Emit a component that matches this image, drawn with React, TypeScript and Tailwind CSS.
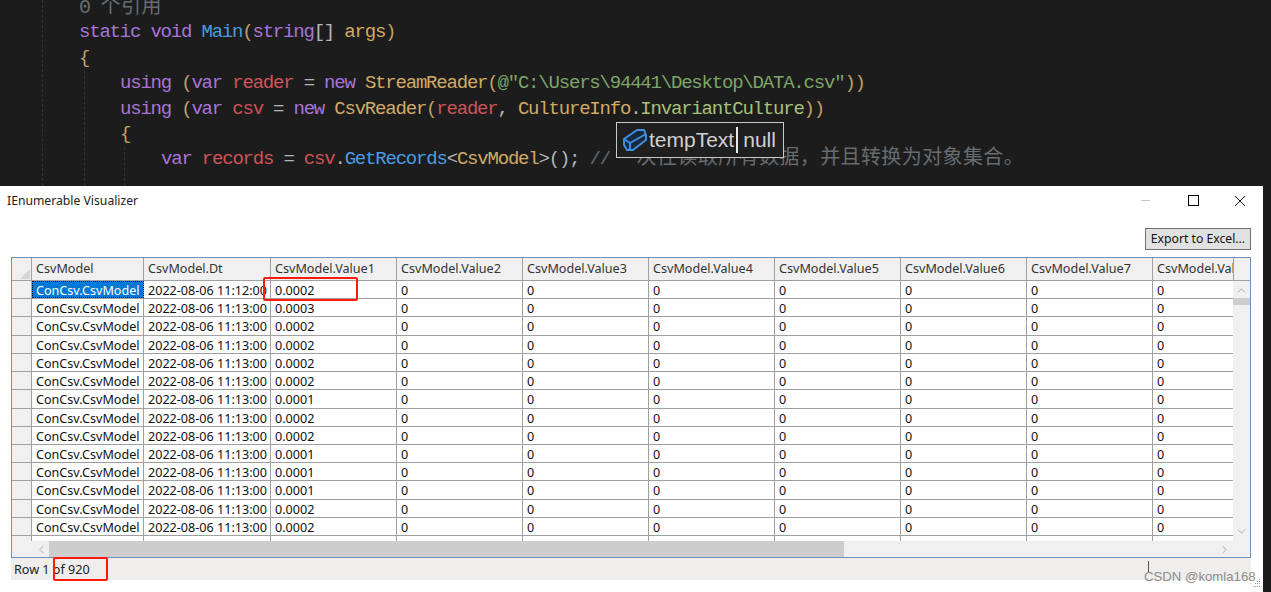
import React from "react";
import { ChevronUp, ChevronDown, ChevronLeft, ChevronRight } from "lucide-react";

const K = "text-[#a974d8]";
const R = "text-[#cf5358]";
const Y = "text-[#d2aa66]";
const B = "text-[#4a9be2]";
const G = "text-[#7ea568]";
const W = "text-[#b4b7ba]";
const P = "text-[#c2a067]";
const C = "text-[#676c71]";
const H = "text-[#a8c07a]";
const CJK = " font-['Noto_Sans_CJK_SC',sans-serif] text-[20px] tracking-[0.4px] leading-[0px]";

type Tok = [string, string];
const code: { indent: number; toks: Tok[] }[] = [
  { indent: 79, toks: [[C + " text-[20px]", "0 "], [C + CJK, "个引用"]] },
  { indent: 79, toks: [[K, "static void "], [B, "Main"], [P, "("], [K, "string"], [W, "[] "], [Y, "args"], [P, ")"]] },
  { indent: 79, toks: [[P, "{"]] },
  { indent: 120, toks: [[K, "using "], [P, "("], [K, "var "], [R, "reader "], [W, "= "], [K, "new "], [Y, "StreamReader"], [P, "("], [G, '@"C:\\Users\\94441\\Desktop\\DATA.csv"'], [P, "))"]] },
  { indent: 120, toks: [[K, "using "], [P, "("], [K, "var "], [R, "csv "], [W, "= "], [K, "new "], [Y, "CsvReader"], [P, "("], [R, "reader"], [W, ", "], [Y, "CultureInfo"], [W, "."], [H, "InvariantCulture"], [P, "))"]] },
  { indent: 120, toks: [[P, "{"]] },
  { indent: 161, toks: [[K, "var "], [R, "records "], [W, "= "], [R, "csv"], [W, "."], [B, "GetRecords"], [W, "<"], [Y, "CsvModel"], [W, ">(); "], [C, "// "], [C + CJK + " -ml-[4px]", "一次性读取所有数据，并且转换为对象集合。"]] },
];

const colWidths = [112, 127, 126, 126, 126, 126, 126, 126, 126, 81];
const headers = ["CsvModel", "CsvModel.Dt", "CsvModel.Value1", "CsvModel.Value2", "CsvModel.Value3", "CsvModel.Value4", "CsvModel.Value5", "CsvModel.Value6", "CsvModel.Value7", "CsvModel.Value8"];
const rows: [string, string][] = [
  ["11:12:00", "0.0002"], ["11:13:00", "0.0003"], ["11:13:00", "0.0002"], ["11:13:00", "0.0002"],
  ["11:13:00", "0.0002"], ["11:13:00", "0.0002"], ["11:13:00", "0.0001"], ["11:13:00", "0.0002"],
  ["11:13:00", "0.0002"], ["11:13:00", "0.0001"], ["11:13:00", "0.0001"], ["11:13:00", "0.0001"],
  ["11:13:00", "0.0002"], ["11:13:00", "0.0002"], ["", ""],
];

function Cell({ w, children, selected }: { w: number; children?: React.ReactNode; selected?: boolean }) {
  return (
    <div
      style={{ width: w }}
      className={
        "shrink-0 h-full overflow-hidden whitespace-nowrap border-r border-[#a0a0a0] pl-[4px] leading-[20px] " +
        (selected ? "bg-[#0078d7] text-white outline-1 outline-dotted -outline-offset-1 outline-black" : "text-[#111]")
      }
    >
      {children}
    </div>
  );
}

function CodeGuide({ x, top, h }: { x: number; top: number; h: number }) {
  return <div style={{ left: x, top, height: h }} className="absolute w-0 border-l border-dashed border-[#333]" />;
}

export default function App() {
  return (
    <div className="relative w-[1271px] h-[592px] overflow-hidden bg-[#1c1c1c] flex flex-col font-['Noto_Sans','Open_Sans',sans-serif] text-[12.6px]">
      {/* code editor */}
      <div className="h-[186px] shrink-0 overflow-hidden font-['Liberation_Mono',monospace] text-[19px] tracking-[-1.2px]">
        <div className="-mt-[5px]">
          {code.map((l, i) => (
            <div key={i} style={{ paddingLeft: l.indent }} className="h-[25.4px] leading-[25.4px] whitespace-pre">
              {l.toks.map((t, j) => (
                <span key={j} className={t[0]}>{t[1]}</span>
              ))}
            </div>
          ))}
        </div>
      </div>
      <CodeGuide x={42} top={0} h={186} />
      <CodeGuide x={84} top={66} h={120} />
      <CodeGuide x={124} top={147} h={39} />

      {/* tooltip */}
      <div className="absolute left-[616px] top-[122px] w-[168px] h-[36px] bg-[#1f1f1f] border border-[#c8c8c8] flex items-center pl-[5px] text-[21px] text-[#cfd0d2] font-['Liberation_Sans',sans-serif]">
        <svg width="26" height="26" viewBox="0 0 26 26" fill="none" stroke="#3f8fe0" strokeWidth="2" strokeLinejoin="round" className="shrink-0">
          <path d="M2 12 L15 3 L22 3 L24 8 L24 13 L11 23 L5 23 L2 18 Z" fill="#16293f" />
          <path d="M2 12 L8 16 L24 7" />
          <path d="M8 16 L8 23" />
        </svg>
        <span className="ml-[1px]">tempText</span>
        <span className="ml-[2px] w-[2px] h-[26px] bg-[#e8e8e8]" />
        <span className="ml-[5px]">null</span>
      </div>

      {/* visualizer window */}
      <div className="w-[1263px] flex-1 bg-white flex flex-col min-h-0">
        <div className="h-[29px] shrink-0 flex items-center pl-[7px] text-[#222] relative">
          <span className="mt-[1px] text-[12.2px]">IEnumerable Visualizer</span>
          <div className="ml-auto flex items-center h-full">
            <div className="w-[9px] h-px bg-[#c8c8c8] mr-[38px]" />
            <div className="w-[11px] h-[11px] border border-black mr-[35px]" />
            <svg width="12" height="12" viewBox="0 0 12 12" className="mr-[17px]" stroke="#111" strokeWidth="1">
              <path d="M1 1 L11 11 M11 1 L1 11" />
            </svg>
          </div>
        </div>
        <div className="h-[42px] shrink-0 flex items-start justify-end pr-[12px] pt-[13px]">
          <div className="w-[106px] h-[22px] bg-[#e1e1e1] border border-[#707070] flex items-center justify-center text-[12.2px] text-[#111] whitespace-nowrap">
            Export to Excel...
          </div>
        </div>

        {/* data grid */}
        <div className="mx-[11px] w-[1240px] h-[301px] shrink-0 border border-[#6d93bd] flex flex-col bg-white overflow-hidden">
          <div className="h-[23px] shrink-0 flex bg-[#f0f0f0] border-b border-[#a0a0a0] text-[#333]">
            <div className="w-[20px] shrink-0 border-r border-[#a0a0a0] relative">
              <svg width="10" height="10" className="absolute right-[1px] bottom-[1px]"><path d="M10 0 L10 10 L0 10 Z" fill="#d4d4d4" /></svg>
            </div>
            {headers.map((h, i) => (
              <Cell key={h} w={colWidths[i]}><span className="relative top-[1px] text-[#333]">{h}</span></Cell>
            ))}
          </div>
          <div className="flex-1 min-h-0 flex overflow-hidden">
            <div className="flex-1 min-w-0 overflow-hidden">
              {rows.map((r, i) => (
                <div key={i} className="h-[18.23px] flex border-b border-[#a0a0a0]">
                  <div className="w-[20px] shrink-0 bg-[#f0f0f0] border-r border-[#a0a0a0]" />
                  {r[0] ? (
                    <>
                      <Cell w={colWidths[0]} selected={i === 0}>ConCsv.CsvModel</Cell>
                      <Cell w={colWidths[1]}>2022-08-06 {r[0]}</Cell>
                      <Cell w={colWidths[2]}>{r[1]}</Cell>
                      {colWidths.slice(3).map((w, k) => (
                        <Cell key={k} w={w}>0</Cell>
                      ))}
                    </>
                  ) : (
                    colWidths.map((w, k) => <Cell key={k} w={w} />)
                  )}
                </div>
              ))}
            </div>
            <div className="w-[17px] shrink-0 bg-[#f0f0f0] flex flex-col items-center">
              <ChevronUp size={13} strokeWidth={1.5} className="text-[#9a9a9a] mt-[3px]" />
              <div className="w-full h-[7px] bg-[#cdcdcd] mt-[1px]" />
              <ChevronDown size={13} strokeWidth={1.5} className="text-[#9a9a9a] mt-auto mb-[3px]" />
            </div>
          </div>
          <div className="h-[16px] shrink-0 bg-[#f0f0f0] flex items-center">
            <ChevronLeft size={13} strokeWidth={1.5} className="text-[#9a9a9a] ml-[23px]" />
            <div className="w-[795px] h-full bg-[#cdcdcd] ml-[1px]" />
            <ChevronRight size={13} strokeWidth={1.5} className="text-[#9a9a9a] ml-auto mr-[19px]" />
          </div>
        </div>

        {/* status */}
        <div className="mx-[11px] w-[1240px] h-[22px] shrink-0 bg-[#f0eded] pl-[3px] leading-[23px] text-[#222] relative">
          Row 1 of 920
          <div className="absolute left-[1137px] top-[3px] w-px h-[11px] bg-[#555]" />
        </div>
      </div>

      {/* annotations and watermark */}
      <div className="absolute left-[263px] top-[277px] w-[95px] h-[24px] border-2 border-[#ff1a0e] rounded-[2px]" />
      <div className="absolute left-[53px] top-[557px] w-[55px] h-[24px] border-2 border-[#ff1a0e] rounded-[2px]" />
      <div className="absolute left-[1144px] top-[569px] text-[13.2px] leading-[16px] text-[#8c8c8c] font-['Liberation_Sans',sans-serif]">CSDN @komla168</div>
      <svg width="12" height="12" className="absolute left-[1250px] top-[578px]" fill="#8aa0b8">
        <rect x="9" y="1" width="1" height="1" /><rect x="7" y="3" width="1" height="1" /><rect x="9" y="3" width="1" height="1" />
        <rect x="5" y="5" width="1" height="1" /><rect x="7" y="5" width="1" height="1" /><rect x="9" y="5" width="1" height="1" />
        <rect x="3" y="8" width="1" height="1" /><rect x="5" y="8" width="1" height="1" /><rect x="7" y="8" width="1" height="1" /><rect x="9" y="8" width="1" height="1" />
      </svg>
    </div>
  );
}
